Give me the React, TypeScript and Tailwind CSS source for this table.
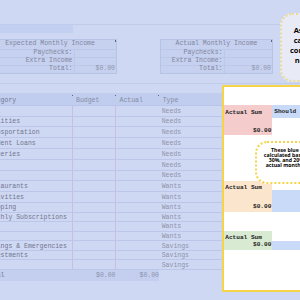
import React from "react";

const rows: { cat: string; type: string; h: string }[] = [
  { cat: "Rent", type: "Needs", h: "h-[10.8px]" },
  { cat: "Utilities", type: "Needs", h: "h-[10.8px]" },
  { cat: "Transportation", type: "Needs", h: "h-[10.8px]" },
  { cat: "Student Loans", type: "Needs", h: "h-[10.8px]" },
  { cat: "Groceries", type: "Needs", h: "h-[10.8px]" },
  { cat: "", type: "Needs", h: "h-[10.8px]" },
  { cat: "", type: "Needs", h: "h-[10.8px]" },
  { cat: "Restaurants", type: "Wants", h: "h-[10.8px]" },
  { cat: "Activities", type: "Wants", h: "h-[10.8px]" },
  { cat: "Shopping", type: "Wants", h: "h-[9.6px]" },
  { cat: "Monthly Subscriptions", type: "Wants", h: "h-[9.6px]" },
  { cat: "", type: "Wants", h: "h-[9.6px]" },
  { cat: "", type: "Wants", h: "h-[9.6px]" },
  { cat: "Savings & Emergencies", type: "Savings", h: "h-[9.6px]" },
  { cat: "Investments", type: "Savings", h: "h-[9.6px]" },
  { cat: "", type: "Savings", h: "h-[9.6px]" },
];

function Mark({ className }: { className: string }) {
  return <span className={"absolute w-[1.5px] h-[1.5px] bg-[#5d6480] " + className} />;
}

function IncomeBox({
  title,
  labelW,
  width,
  extra,
}: {
  title: string;
  labelW: string;
  width: string;
  extra: string;
}) {
  const lines: [string, string][] = [
    ["Paychecks:", ""],
    [extra, ""],
    ["Total:", "$0.00"],
  ];
  return (
    <div className={"relative border border-[#b6c2e6] bg-[#c6d1f0] " + width}>
      <Mark className="right-[0px] top-[0px]" />
      <div className="h-[8.4px] flex items-center justify-center">{title}</div>
      {lines.map(([l, v], i) => (
        <div key={i} className="h-[8.1px] flex border-t border-[#bcc7ea]">
          <div className={"flex items-center justify-end pr-[1px] border-r border-[#bcc7ea] " + labelW}>{l}</div>
          <div className="flex-1 flex items-center justify-end pr-[1px] text-[#9198ae]">{v}</div>
        </div>
      ))}
    </div>
  );
}

export default function App() {
  return (
    <div className="relative w-[300px] h-[300px] overflow-hidden bg-[#cfd8f2] font-['Liberation_Mono','DejaVu_Sans_Mono',monospace] text-[6.5px] leading-none text-[#7f869c]">
      <div className="-ml-[17px] w-[340px]">
        <div className="h-[25px] border-b border-[#c1cbea]" />
        <div className="h-[8px] flex">
          <div className="w-[90px] bg-[#c3cff0]" />
        </div>
        <div className="h-[6.3px]" />
        <div className="flex items-start">
          <IncomeBox title="Expected Monthly Income" labelW="w-[90.5px]" width="w-[134px]" extra="Extra Income" />
          <div className="w-[43px]" />
          <IncomeBox title="Actual Monthly Income" labelW="w-[63.5px]" width="w-[113px]" extra="Extra Income:" />
        </div>
        <div className="h-[9.6px] border-b border-[#c1cbea]" />
        <div className="flex items-start pt-[1.6px]">
          {/* table */}
          <div className="w-[239.3px] pt-[8.2px]">
            <div className="h-[12.4px] flex bg-[#c1cdef] border-b border-[#b8c4e8] text-[#858ca3]">
              <div className="relative w-[90px] flex items-end pb-[0.5px] pl-[2px] text-[#6f7690]">
                Category
                <Mark className="right-[0px] top-[1.5px]" />
              </div>
              <div className="relative w-[43px] flex items-end pb-[0.5px] pl-[3px]">
                Budget
                <Mark className="right-[0px] top-[1.5px]" />
              </div>
              <div className="relative w-[43px] flex items-end pb-[0.5px] pl-[3.5px]">
                Actual
                <Mark className="right-[0px] top-[1.5px]" />
              </div>
              <div className="flex-1 flex items-end pb-[0.5px] pl-[3.7px]">Type</div>
            </div>
            {rows.map((r, i) => (
              <div key={i} className={"flex border-b border-[#bcc6e9] " + r.h}>
                <div className="w-[90px] flex items-center pt-[2.5px] pl-[2px] border-r border-[#c7c0dc] text-[#6f7690] whitespace-nowrap">
                  {r.cat}
                </div>
                <div className="w-[43px] border-r border-[#c7c0dc]" />
                <div className="w-[43px]" />
                <div className="flex-1 flex items-center pt-[2.5px] pl-[2.7px] text-[#8d94ab]">{r.type}</div>
              </div>
            ))}
            <div className="h-[10.5px] flex">
              <div className="w-[176px] flex bg-[#c4cff0]">
                <div className="w-[90px] flex items-center pt-[2px] pl-[2px] text-[#6f7690]">Total</div>
                <div className="w-[43px] flex items-center pt-[2px] justify-end pr-[0.5px] text-[#8d94ab]">$0.00</div>
                <div className="w-[43px] flex items-center pt-[2px] justify-end pr-[0px] text-[#8d94ab]">$0.00</div>
              </div>
            </div>
          </div>
          {/* right panel */}
          <div className="relative w-[100px] h-[207px] border-2 border-[#f5d547] bg-white text-[6.1px] font-bold text-[#222]">
            <div className="h-[18px]" />
            <div className="flex items-start">
              <div className="w-[48px] h-[30px] bg-[#f4cccc] flex flex-col justify-between pl-[1px] pr-[1px] pt-[5px] pb-[1px]">
                <span>Actual Sum</span>
                <span className="self-end">$0.00</span>
              </div>
              <div className="flex-1 h-[13px] bg-[#c9daf8] flex items-center pl-[2px] pt-[1px]">Should</div>
            </div>
            <div className="h-[46px]" />
            <div className="flex items-start">
              <div className="w-[48px] h-[30.7px] bg-[#fce5cd] flex flex-col justify-between pl-[1px] pr-[1px] pt-[4px] pb-[2px]">
                <span>Actual Sum</span>
                <span className="self-end">$0.00</span>
              </div>
              <div className="flex-1 mt-[9px] h-[21.7px] bg-[#c9daf8]" />
            </div>
            <div className="h-[19px]" />
            <div className="flex items-start">
              <div className="w-[48px] h-[19.3px] bg-[#d9ead3] flex flex-col justify-between pl-[1px] pr-[1px] pt-[4px] pb-[2px]">
                <span>Actual Sum</span>
                <span className="self-end">$0.00</span>
              </div>
              <div className="flex-1 mt-[10.3px] h-[9px] bg-[#c9daf8]" />
            </div>
            <div className="absolute left-[31px] top-[54px] w-[82px] h-[43px] rounded-[12px] border-2 border-dotted border-[#f5d547] bg-white pt-[4.5px] text-center font-['Open_Sans','Noto_Sans',sans-serif] font-bold text-[5.2px] leading-[5.2px] text-black">
              <div>These blue cells are</div>
              <div>calculated based on 50%,</div>
              <div>30%, and 20% of your</div>
              <div>actual monthly income.</div>
            </div>
          </div>
        </div>
      </div>
      {/* top-right callout */}
      <div className="absolute left-[280px] top-[13px] w-[52px] h-[69px] rounded-[12px] border-2 border-dotted border-[#e8dc98] bg-[#e8eaf6] pt-[10px] text-center font-['Open_Sans','Noto_Sans',sans-serif] font-bold text-[7.5px] leading-[10px] text-black">
        <div>As you</div>
        <div>can be</div>
        <div>consider</div>
        <div>needs</div>
      </div>
    </div>
  );
}
